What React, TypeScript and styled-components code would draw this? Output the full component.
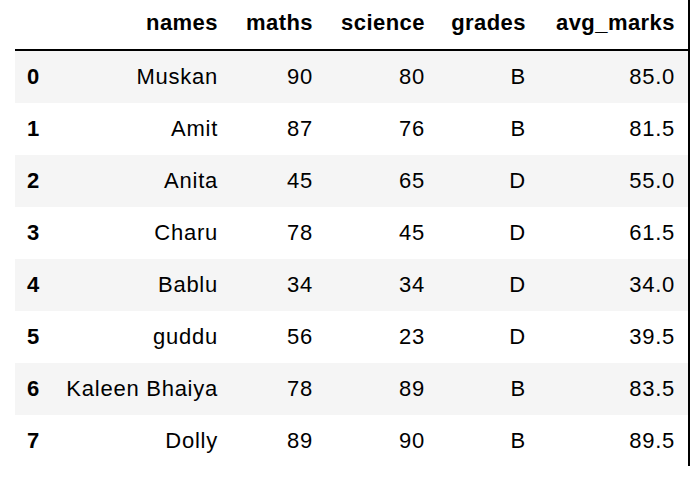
import React from "react";
import styled, { createGlobalStyle } from "styled-components";

const GlobalStyle = createGlobalStyle`
  html, body {
    margin: 0;
    padding: 0;
    background: #ffffff;
  }
  body {
    font-family: "Liberation Sans", Arial, sans-serif;
    color: #000;
  }
`;

const OutputArea = styled.div`
  width: 673px;
  padding-left: 15px;
  border-right: 2px solid #000;
  height: 466px;
  overflow: hidden;
`;

const Table = styled.table`
  border-collapse: separate;
  border-spacing: 0;
  table-layout: fixed;
  width: 673px;
  font-size: 22px;
  line-height: 26px;
  color: #000;
`;

const HeadCell = styled.th`
  padding: 10px 13px 13px 12px;
  border-bottom: 2px solid #000;
  text-align: right;
  font-weight: bold;
  letter-spacing: 0.45px;
  white-space: nowrap;
  vertical-align: top;
`;

const Row = styled.tr<{ $striped: boolean }>`
  background: ${(p) => (p.$striped ? "#f5f5f5" : "#ffffff")};
`;

const IndexCell = styled.th`
  padding: 13px 0 13px 12px;
  text-align: left;
  font-weight: bold;
  vertical-align: top;
`;

const Cell = styled.td`
  padding: 13px 13px 13px 0;
  text-align: right;
  letter-spacing: 0.75px;
  white-space: nowrap;
  vertical-align: top;
`;

const columns = ["names", "maths", "science", "grades", "avg_marks"];
const widths = [37, 179, 95, 112, 101, 149];

const rows: [string, number, number, string, string][] = [
  ["Muskan", 90, 80, "B", "85.0"],
  ["Amit", 87, 76, "B", "81.5"],
  ["Anita", 45, 65, "D", "55.0"],
  ["Charu", 78, 45, "D", "61.5"],
  ["Bablu", 34, 34, "D", "34.0"],
  ["guddu", 56, 23, "D", "39.5"],
  ["Kaleen Bhaiya", 78, 89, "B", "83.5"],
  ["Dolly", 89, 90, "B", "89.5"],
];

export default function App() {
  return (
    <>
      <GlobalStyle />
      <OutputArea>
        <Table>
          <colgroup>
            {widths.map((w, i) => (
              <col key={i} style={{ width: w }} />
            ))}
          </colgroup>
          <thead>
            <tr>
              <HeadCell />
              {columns.map((c) => (
                <HeadCell key={c}>{c}</HeadCell>
              ))}
            </tr>
          </thead>
          <tbody>
            {rows.map((r, i) => (
              <Row key={i} $striped={i % 2 === 0}>
                <IndexCell>{i}</IndexCell>
                {r.map((v, j) => (
                  <Cell key={j}>{v}</Cell>
                ))}
              </Row>
            ))}
          </tbody>
        </Table>
      </OutputArea>
    </>
  );
}
